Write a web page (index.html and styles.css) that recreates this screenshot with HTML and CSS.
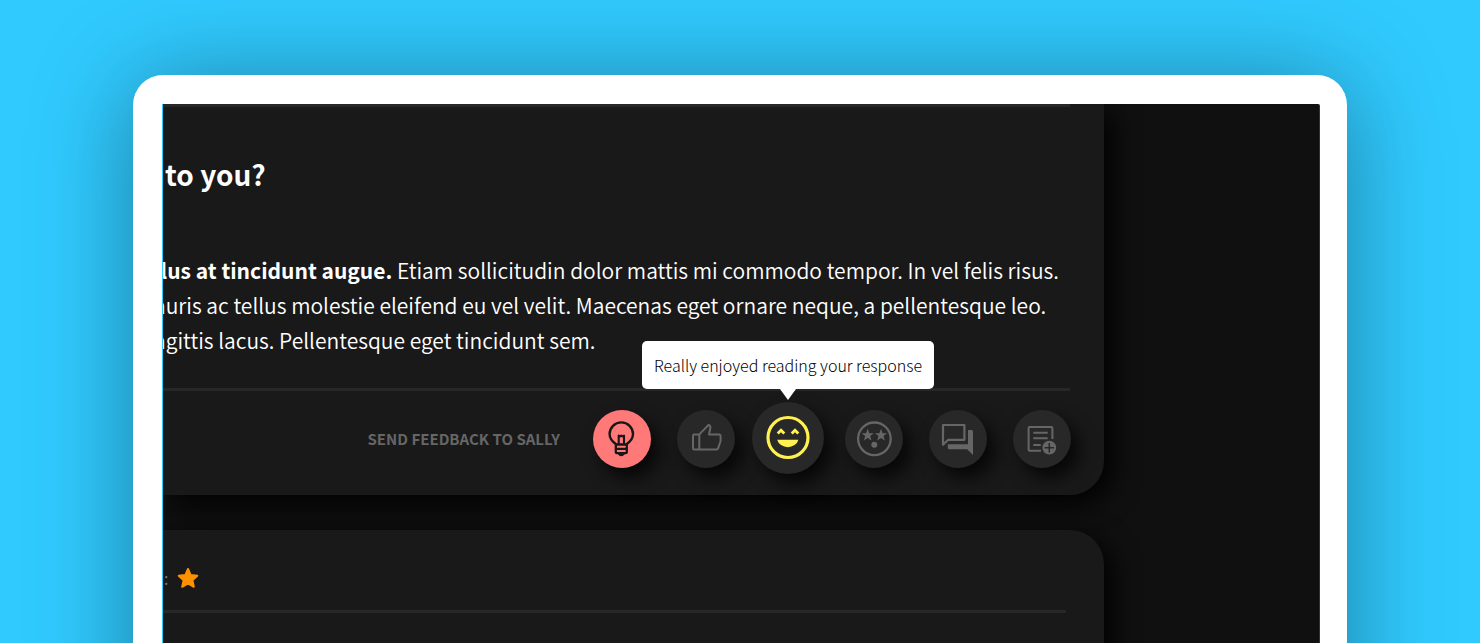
FILE: index.html
```html
<!DOCTYPE html>
<html lang="en">
<head>
<meta charset="utf-8">
<title>Feedback</title>
<link rel="stylesheet" href="styles.css">
</head>
<body>
<div class="device">
  <main class="screen">
    <article class="card">
      <hr class="rule">
      <h2 class="question">to you?</h2>
      <div class="answer">
        <p class="line"><strong>llus at tincidunt augue.</strong> Etiam sollicitudin dolor mattis mi commodo tempor. In vel felis risus.</p>
        <p class="line">auris ac tellus molestie eleifend eu vel velit. Maecenas eget ornare neque, a pellentesque leo.</p>
        <p class="line">agittis lacus. Pellentesque eget tincidunt sem.</p>
      </div>
      <hr class="rule">
      <footer class="feedback">
        <span class="feedback-label">SEND FEEDBACK TO SALLY</span>
        <div class="reactions">
          <button class="reaction reaction-idea" type="button" aria-label="Insightful">
            <svg viewBox="0 0 58 58" fill="none" stroke="currentColor" stroke-width="2.4" stroke-linejoin="round">
              <path d="M23.2 34.3C19.6 32 16.6 28.8 16.6 24.1A11.7 11.7 0 0 1 40 24.1C40 28.8 37 32 33.4 34.3"/>
              <path d="M22.8 34.5H33.8V42.2Q33.8 43.2 32.8 43.2H23.8Q22.8 43.2 22.8 42.2ZM22.8 38.9H33.8" stroke-width="2.3"/>
              <path d="M25.7 34.4V25.5L27 26.5L28.3 25.5L29.6 26.5L31 25.5V34.4" stroke-width="2.1"/>
              <path d="M25 43.5H31.6L30 45.6H26.6Z" fill="currentColor" stroke-width="1"/>
            </svg>
          </button>
          <button class="reaction" type="button" aria-label="Like">
            <svg viewBox="0 0 58 58" fill="none" stroke="currentColor" stroke-width="2" stroke-linejoin="round">
              <path d="M22.3 24.5H17.2Q16 24.5 16 25.7V38.2Q16 39.4 17.2 39.4H39.6Q40.7 39.4 41.1 38.3L43.6 31V26Q43.6 24.5 42.1 24.5H32L33.4 17.5Q33.6 16.4 32.8 15.6L31.8 14.8L23.2 23.4Q22.3 24.2 22.3 25.4V39.4"/>
            </svg>
          </button>
          <button class="reaction reaction-active" type="button" aria-label="Enjoyed" aria-describedby="tip">
            <svg viewBox="0 0 72 72" fill="none" stroke="currentColor" stroke-width="3.2">
              <circle cx="36" cy="35.5" r="20"/>
              <path d="M25.7 31.6L29 28.2L32.3 31.6M39.7 31.6L43 28.2L46.3 31.6" stroke-width="2.8"/>
              <path d="M25.2 37.7H46.4A10.9 9.8 0 0 1 25.2 37.7Z" fill="currentColor" stroke="none"/>
            </svg>
            <span class="tooltip" id="tip" role="tooltip">Really enjoyed reading your response</span>
          </button>
          <button class="reaction" type="button" aria-label="Amazed">
            <svg viewBox="0 0 58 58" fill="currentColor">
              <circle cx="29.4" cy="28.8" r="16.3" fill="none" stroke="currentColor" stroke-width="2.3"/>
              <path id="star" d="M22.7 18.8L24.3 23.2L28.8 23.3L25.2 26.1L26.5 30.6L22.7 28L18.9 30.6L20.2 26.1L16.6 23.3L21.1 23.2Z"/>
              <use href="#star" x="13.3"/>
              <circle cx="29.3" cy="34.7" r="3"/>
            </svg>
          </button>
          <button class="reaction" type="button" aria-label="Discuss">
            <svg viewBox="0 0 58 58" fill="currentColor">
              <path d="M14 15H35.4V29.8H19.2L14 34.8Z" fill="none" stroke="currentColor" stroke-width="2.2" stroke-linejoin="round"/>
              <path d="M39 20H42.5Q44 20 44 21.5V45L38.2 39.2H20.3Q18.8 39.2 18.8 37.7V34.2H39Z"/>
            </svg>
          </button>
          <button class="reaction" type="button" aria-label="Add note">
            <svg viewBox="0 0 58 58" fill="none" stroke="currentColor" stroke-width="2">
              <path d="M28 40.8H16.8Q15.6 40.8 15.6 39.6V18.2Q15.6 17 16.8 17H38.2Q39.4 17 39.4 18.2V29"/>
              <path d="M20.3 22.7H34.7M20.3 28.3H34.7M20.3 35H27.8"/>
              <circle cx="36.3" cy="37.7" r="6.9" fill="currentColor" stroke="none"/>
              <path class="plus" d="M36.3 33V42.4M31.6 37.7H41" stroke-width="1.5"/>
            </svg>
          </button>
        </div>
      </footer>
    </article>
    <article class="card card-next">
      <header class="rating">
        <span class="rating-label">:</span>
        <svg class="rating-star" viewBox="0 0 24 24" role="img" aria-label="Star">
          <path d="M12 3L14.7 9.1L21.3 9.8L16.4 14.2L17.8 20.8L12 17.4L6.2 20.8L7.6 14.2L2.7 9.8L9.3 9.1Z"/>
        </svg>
      </header>
      <hr class="rule">
    </article>
  </main>
</div>
</body>
</html>
```
FILE: styles.css
```css
* {
  box-sizing: border-box;
}

body {
  margin: 0;
  height: 100vh;
  overflow: hidden;
  display: flex;
  background: #30caff;
  font-family: "Noto Sans CJK SC", "Source Sans Pro", sans-serif;
  color: #fff;
}

.device {
  flex: 1;
  min-width: 0;
  height: 130vh;
  margin: 75px 133px 0;
  padding: 29px 27px 0 29px;
  display: flex;
  background: #fff;
  border-radius: 30px;
  box-shadow: 0 8px 100px rgba(0, 0, 0, 0.38);
}

.screen {
  flex: 1;
  min-width: 0;
  display: flex;
  flex-direction: column;
  gap: 35px;
  padding-right: 215px;
  overflow: hidden;
  background: #101010;
  border-left: 1px solid #30caff;
  border-right: 1px solid #333;
  border-top-right-radius: 2px;
}

.card {
  padding-right: 34px;
  background: #191919;
  border-radius: 0 0 34px 0;
  box-shadow: 8px 8px 28px #000;
}

.card-next {
  flex: 1;
  padding-right: 38px;
  border-radius: 0 34px 0 0;
}

.rule {
  height: 3px;
  margin: 0;
  border: 0;
  background: #272727;
}

.question {
  margin: 45px 0 57px;
  padding-left: 2px;
  font-size: 28px;
  line-height: 44px;
  font-weight: 700;
}

.answer {
  margin: 0 0 30px -9px;
  font-size: 21px;
  line-height: 35px;
  font-weight: 350;
}

.line {
  margin: 0;
  white-space: nowrap;
}

.line strong {
  font-weight: 700;
}

.feedback {
  display: flex;
  align-items: center;
  justify-content: flex-end;
  gap: 33px;
  margin-right: -1px;
  padding: 19px 0 27px;
}

.feedback-label {
  color: #666;
  font-size: 15px;
  line-height: 24px;
  font-weight: 700;
}

.reactions {
  display: flex;
  align-items: center;
  gap: 26px;
}

.reaction {
  position: relative;
  width: 58px;
  height: 58px;
  padding: 0;
  border: 0;
  border-radius: 50%;
  background: #282828;
  color: #666;
  font: inherit;
  box-shadow: 8px 10px 18px rgba(0, 0, 0, 0.75);
}

.reaction svg {
  display: block;
  width: 100%;
  height: 100%;
}

.reaction-idea {
  background: #ff7979;
  color: #171717;
}

.reaction-active {
  width: 72px;
  height: 72px;
  margin: -8px -5px -6px -9px;
  color: #fff14f;
}

.plus {
  stroke: #282828;
}

.tooltip {
  position: absolute;
  bottom: calc(100% + 13px);
  left: 50%;
  transform: translateX(-50%);
  padding: 12px;
  border-radius: 5px;
  background: #fff;
  color: #000;
  font-size: 16px;
  line-height: 24px;
  font-weight: 300;
  white-space: nowrap;
}

.tooltip::after {
  content: "";
  position: absolute;
  top: 100%;
  left: 50%;
  margin-left: -8px;
  border: 8px solid transparent;
  border-top: 11px solid #fff;
  border-bottom: 0;
}

.rating {
  display: flex;
  align-items: center;
  gap: 8px;
  padding: 32px 0 16px 1px;
  line-height: 32px;
}

.rating-label {
  color: #777;
  font-size: 16px;
}

.rating-star {
  width: 24px;
  height: 24px;
  fill: #ff9100;
  stroke: #ff9100;
  stroke-width: 2;
  stroke-linejoin: round;
}
```
